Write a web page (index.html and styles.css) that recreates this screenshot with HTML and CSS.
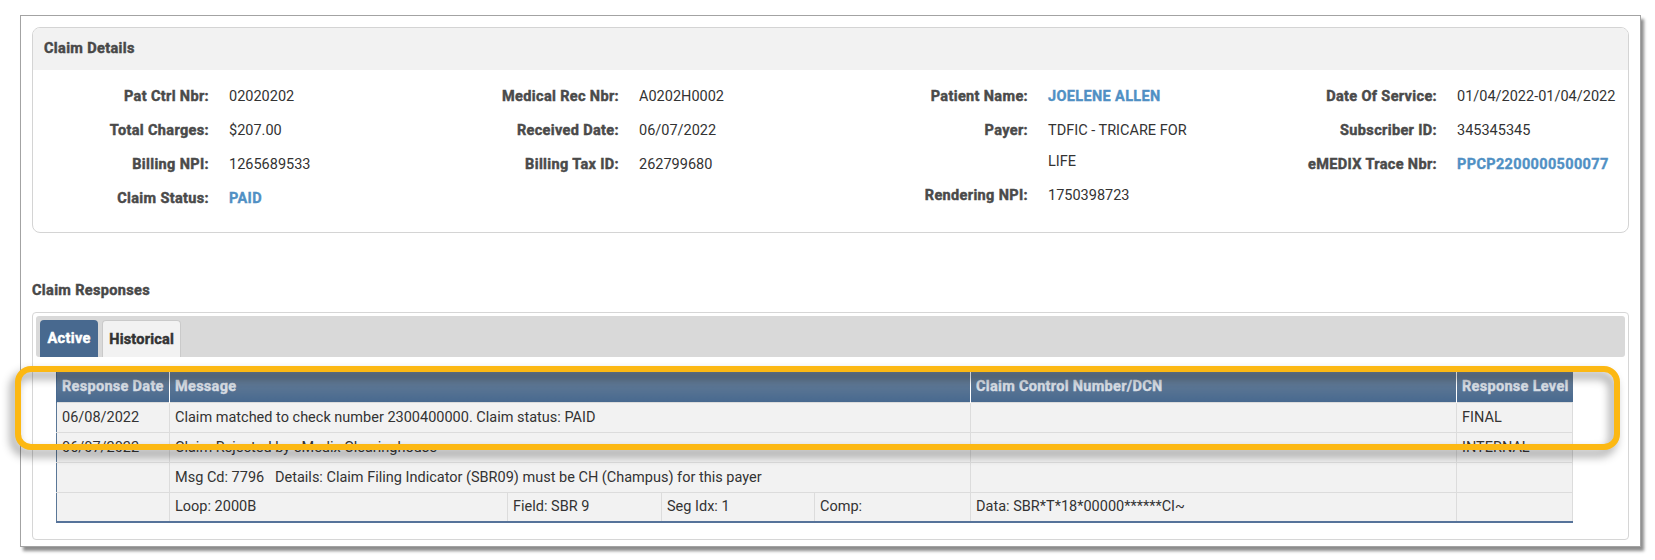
FILE: index.html
```html
<!DOCTYPE html>
<html lang="en">
<head>
<meta charset="utf-8">
<title>Claim Details</title>
<link rel="stylesheet" href="styles.css">
</head>
<body>
<div class="page">
  <div class="frame">
    <section class="details">
      <div class="details-head">Claim Details</div>
      <div class="details-body">
        <div class="col col1">
          <div class="lbl">Pat Ctrl Nbr:</div><div class="val">02020202</div>
          <div class="lbl">Total Charges:</div><div class="val">$207.00</div>
          <div class="lbl">Billing NPI:</div><div class="val">1265689533</div>
          <div class="lbl">Claim Status:</div><div class="val link">PAID</div>
        </div>
        <div class="col col2">
          <div class="lbl">Medical Rec Nbr:</div><div class="val">A0202H0002</div>
          <div class="lbl">Received Date:</div><div class="val">06/07/2022</div>
          <div class="lbl">Billing Tax ID:</div><div class="val">262799680</div>
        </div>
        <div class="col col3">
          <div class="lbl">Patient Name:</div><div class="val link">JOELENE ALLEN</div>
          <div class="lbl">Payer:</div><div class="val">TDFIC - TRICARE FOR LIFE</div>
          <div class="lbl">Rendering NPI:</div><div class="val">1750398723</div>
        </div>
        <div class="col col4">
          <div class="lbl">Date Of Service:</div><div class="val">01/04/2022-01/04/2022</div>
          <div class="lbl">Subscriber ID:</div><div class="val">345345345</div>
          <div class="lbl">eMEDIX Trace Nbr:</div><div class="val link">PPCP2200000500077</div>
        </div>
      </div>
    </section>

    <div class="resp-title">Claim Responses</div>

    <section class="tabs-box">
      <div class="tabbar">
        <div class="tab active">Active</div>
        <div class="tab hist">Historical</div>
      </div>
      <table class="resp">
        <colgroup>
          <col class="c-date"><col class="c-loop"><col class="c-field"><col class="c-seg"><col class="c-comp"><col class="c-ccn"><col class="c-lvl">
        </colgroup>
        <thead>
          <tr>
            <th>Response Date</th>
            <th colspan="4">Message</th>
            <th>Claim Control Number/DCN</th>
            <th>Response Level</th>
          </tr>
        </thead>
        <tbody>
          <tr>
            <td>06/08/2022</td>
            <td colspan="4">Claim matched to check number 2300400000. Claim status: PAID</td>
            <td></td>
            <td>FINAL</td>
          </tr>
          <tr>
            <td>06/07/2022</td>
            <td colspan="4">Claim Rejected by eMedix Clearinghouse</td>
            <td></td>
            <td>INTERNAL</td>
          </tr>
          <tr>
            <td></td>
            <td colspan="4">Msg Cd: 7796&nbsp;&nbsp; Details: Claim Filing Indicator (SBR09) must be CH (Champus) for this payer</td>
            <td></td>
            <td></td>
          </tr>
          <tr class="last">
            <td></td>
            <td>Loop: 2000B</td>
            <td>Field: SBR 9</td>
            <td>Seg Idx: 1</td>
            <td>Comp:</td>
            <td>Data: SBR*T*18*00000******CI~</td>
            <td></td>
          </tr>
        </tbody>
      </table>
    </section>
  </div>
  <div class="callout"></div>
</div>
</body>
</html>
```

FILE: styles.css
```css
* { box-sizing: border-box; }

body {
  margin: 0;
  background: #ffffff;
  font-family: Roboto, "Liberation Sans", Arial, sans-serif;
  font-size: 14.5px;
  color: #333333;
}

.page {
  position: relative;
  height: 560px;
  padding: 15px 0 0 20px;
}

.frame {
  width: 1621px;
  height: 532px;
  border: 1px solid #a3a3a3;
  box-shadow: 3px 4px 3px rgba(0, 0, 0, 0.45);
  padding: 11px;
  background: #fff;
}

/* Claim details panel */
.details {
  border: 1px solid #d4d4d4;
  border-radius: 8px;
  height: 206px;
  overflow: hidden;
}

.details-head {
  background: #f2f2f2;
  height: 42px;
  line-height: 42px;
  padding-left: 11px;
  font-weight: 700;
  letter-spacing: 0.35px;
  -webkit-text-stroke: 0.45px currentColor;
  color: #484848;
}

.details-body {
  display: flex;
  padding-top: 11px;
}

.col {
  display: grid;
  column-gap: 20px;
  row-gap: 3px;
  align-content: start;
  line-height: 31px;
}

.col1 { width: 407px; grid-template-columns: 176px 1fr; }
.col2 { width: 390px; grid-template-columns: 179px 1fr; }
.col3 { width: 370px; grid-template-columns: 198px 152px; }
.col4 { flex: 1; grid-template-columns: 237px 1fr; }

.lbl {
  text-align: right;
  font-weight: 700;
  letter-spacing: 0.35px;
  -webkit-text-stroke: 0.45px currentColor;
  color: #4a4a4a;
  white-space: nowrap;
}

.val { color: #333333; }

.link {
  color: #5090c4;
  font-weight: 700;
  letter-spacing: 0.35px;
  -webkit-text-stroke: 0.35px currentColor;
}

/* Claim responses */
.resp-title {
  margin-top: 48px;
  line-height: 20px;
  font-weight: 700;
  letter-spacing: 0.35px;
  -webkit-text-stroke: 0.45px currentColor;
  color: #484848;
}

.tabs-box {
  margin-top: 11px;
  border: 1px solid #d6d6d6;
  border-radius: 4px;
  padding: 3px;
  height: 228px;
}

.tabbar {
  background: #d9d9d9;
  height: 41px;
  border-radius: 3px;
  display: flex;
  align-items: flex-end;
  gap: 4px;
  padding-left: 4px;
}

.tab {
  height: 37px;
  line-height: 37px;
  padding: 0 7.5px;
  font-weight: 700;
  letter-spacing: 0.35px;
  -webkit-text-stroke: 0.45px currentColor;
  border-radius: 4px 4px 0 0;
}

.tab.active {
  background: #48698f;
  color: #ffffff;
}

.tab.hist {
  padding: 0 6px;
  letter-spacing: 0.2px;
  background: #f2f2f2;
  border: 1px solid #cacaca;
  border-bottom: none;
  color: #333333;
}

.resp {
  margin: 15px 0 0 20px;
  width: 1516px;
  border-collapse: collapse;
  table-layout: fixed;
}

.c-date { width: 113px; }
.c-loop { width: 338px; }
.c-field { width: 154px; }
.c-seg { width: 153px; }
.c-comp { width: 156px; }
.c-ccn { width: 486px; }
.c-lvl { width: 116px; }

.resp th {
  height: 30px;
  padding: 0 5px;
  text-align: left;
  font-weight: 700;
  letter-spacing: 0.3px;
  -webkit-text-stroke: 0.4px currentColor;
  color: #d6dce3;
  background: linear-gradient(#6c8096, #48698f);
  border-left: 1px solid #ffffff;
  white-space: nowrap;
  overflow: hidden;
}

.resp th:first-child { border-left: 1px solid #48698f; }

.resp td {
  height: 30px;
  padding: 0 5px;
  background: #f2f2f2;
  border: 1px solid #dcdcdc;
  white-space: nowrap;
  overflow: hidden;
}

.resp td:first-child { border-left: 1px solid #5a7797; }
.resp tr.last td { border-bottom: 2px solid #56739a; }

/* annotation */
.callout {
  position: absolute;
  left: 15px;
  top: 366px;
  width: 1605px;
  height: 84px;
  border: 6px solid #fcb813;
  border-radius: 16px;
  filter: drop-shadow(-4px 6px 5px rgba(0, 0, 0, 0.42));
  pointer-events: none;
}
```
